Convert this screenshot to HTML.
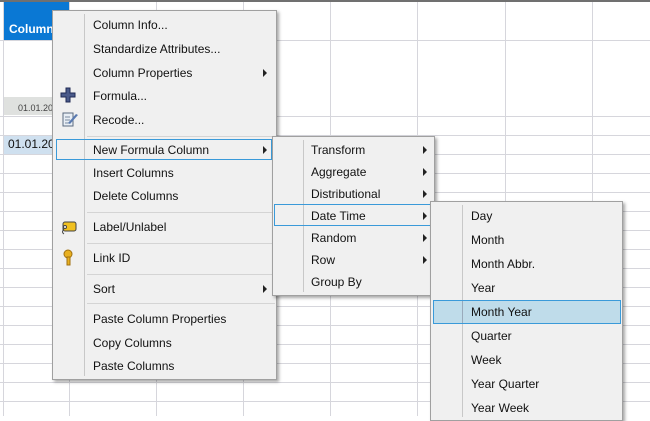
<!DOCTYPE html>
<html><head><style>
*{margin:0;padding:0;box-sizing:border-box}
body{width:650px;height:416px;overflow:hidden;background:#fff;position:relative;font-family:"Liberation Sans",sans-serif;font-size:12px;color:#111}
.a{position:absolute}
.vl{position:absolute;top:2px;bottom:0;width:1px;background:#d6d6dc}
.hl{position:absolute;left:0;right:0;height:1px;background:#d6d6dc}
.menu{position:absolute;background:#f0f0f0;border:1px solid #a0a0a0;box-shadow:2px 2px 3px rgba(0,0,0,.35)}
.div{position:absolute;top:3px;bottom:3px;width:1px;background:#c8c8c8}
.it{position:absolute;white-space:nowrap;line-height:14px}
.ar{position:absolute;width:0;height:0;border-top:4px solid transparent;border-bottom:4px solid transparent;border-left:4px solid #222}
.sep{position:absolute;height:1px;background:#d4d4d4}
.hi{position:absolute;border:1px solid #3a9ad9}
</style></head><body>
<div class="a" style="left:0;top:0;width:650px;height:2px;background:#707070"></div>
<div class="a" style="left:3px;top:2px;width:66px;height:38px;background:#0a78d4;color:#fff;font-weight:bold;padding:20px 0 0 6px;font-size:12px">Column</div>
<div class="a" style="left:3px;top:97px;width:66px;height:18px;background:#dfe1df;font-size:9px;color:#444;padding:6px 0 0 15px">01.01.20</div>
<div class="a" style="left:3px;top:135px;width:66px;height:19px;background:#cfe0ef;font-size:12px;padding:2px 0 0 5px">01.01.20</div>
<div class="vl" style="left:3px"></div>
<div class="vl" style="left:69px"></div><div class="vl" style="left:156px"></div><div class="vl" style="left:243px"></div><div class="vl" style="left:330px"></div><div class="vl" style="left:417px"></div><div class="vl" style="left:505px"></div><div class="vl" style="left:592px"></div>
<div class="hl" style="top:40px"></div>
<div class="hl" style="top:116px"></div><div class="hl" style="top:135px"></div><div class="hl" style="top:154px"></div><div class="hl" style="top:173px"></div><div class="hl" style="top:192px"></div><div class="hl" style="top:211px"></div><div class="hl" style="top:230px"></div><div class="hl" style="top:249px"></div><div class="hl" style="top:268px"></div><div class="hl" style="top:287px"></div><div class="hl" style="top:306px"></div><div class="hl" style="top:325px"></div><div class="hl" style="top:344px"></div><div class="hl" style="top:363px"></div><div class="hl" style="top:382px"></div><div class="hl" style="top:401px"></div>

<div class="menu" style="left:52px;top:10px;width:225px;height:370px">
<div class="div" style="left:31px"></div>
<div class="it" style="left:40px;top:7px">Column Info...</div>
<div class="it" style="left:40px;top:31px">Standardize Attributes...</div>
<div class="it" style="left:40px;top:55px">Column Properties</div><div class="ar" style="left:210px;top:58px"></div>
<div class="it" style="left:40px;top:78px">Formula...</div>
<svg class="a" style="left:7px;top:76px" width="16" height="16"><path d="M6 1h4v5h5v4h-5v5H6v-5H1V6h5z" fill="#4a5a8a" stroke="#1f2a55"/></svg>
<div class="it" style="left:40px;top:102px">Recode...</div>
<svg class="a" style="left:9px;top:100px" width="16" height="16"><rect x="1" y="2" width="10" height="13" fill="#e8eef5" stroke="#5a6a80"/><path d="M3 6h5M3 9h5M3 12h5" stroke="#7a8aa0"/><path d="M6 12l8-9 2 1-8 9z" fill="#5a7ab0"/></svg>
<div class="sep" style="left:34px;top:125px;width:188px"></div>
<div class="hi" style="left:3px;top:128px;width:216px;height:21px"></div>
<div class="it" style="left:40px;top:132px">New Formula Column</div><div class="ar" style="left:210px;top:135px"></div>
<div class="it" style="left:40px;top:155px">Insert Columns</div>
<div class="it" style="left:40px;top:178px">Delete Columns</div>
<div class="sep" style="left:34px;top:201px;width:188px"></div>
<svg class="a" style="left:7px;top:208px" width="18" height="16"><rect x="3" y="3" width="13" height="9" rx="2" fill="#f0c020" stroke="#444"/><circle cx="5" cy="8" r="1.5" fill="#fff" stroke="#444"/><path d="M4 10q-3 3 0 5" stroke="#444" fill="none"/></svg>
<div class="it" style="left:40px;top:209px">Label/Unlabel</div>
<div class="sep" style="left:34px;top:232px;width:188px"></div>
<svg class="a" style="left:10px;top:238px" width="12" height="18"><circle cx="5" cy="5" r="4" fill="#e8b020" stroke="#a07010"/><rect x="4" y="8" width="3" height="8" fill="#e8b020" stroke="#a07010"/></svg>
<div class="it" style="left:40px;top:240px">Link ID</div>
<div class="sep" style="left:34px;top:263px;width:188px"></div>
<div class="it" style="left:40px;top:271px">Sort</div><div class="ar" style="left:210px;top:274px"></div>
<div class="sep" style="left:34px;top:292px;width:188px"></div>
<div class="it" style="left:40px;top:301px">Paste Column Properties</div>
<div class="it" style="left:40px;top:325px">Copy Columns</div>
<div class="it" style="left:40px;top:348px">Paste Columns</div>
</div>

<div class="menu" style="left:272px;top:136px;width:163px;height:160px">
<div class="div" style="left:30px"></div>
<div class="it" style="left:38px;top:6px">Transform</div><div class="ar" style="left:150px;top:9px"></div>
<div class="it" style="left:38px;top:28px">Aggregate</div><div class="ar" style="left:150px;top:31px"></div>
<div class="it" style="left:38px;top:50px">Distributional</div><div class="ar" style="left:150px;top:53px"></div>
<div class="hi" style="left:1px;top:67px;width:157px;height:22px"></div>
<div class="it" style="left:38px;top:72px">Date Time</div><div class="ar" style="left:150px;top:75px"></div>
<div class="it" style="left:38px;top:94px">Random</div><div class="ar" style="left:150px;top:97px"></div>
<div class="it" style="left:38px;top:116px">Row</div><div class="ar" style="left:150px;top:119px"></div>
<div class="it" style="left:38px;top:138px">Group By</div>
</div>

<div class="menu" style="left:430px;top:201px;width:193px;height:220px">
<div class="div" style="left:31px"></div>
<div class="it" style="left:40px;top:7px">Day</div>
<div class="it" style="left:40px;top:31px">Month</div>
<div class="it" style="left:40px;top:55px">Month Abbr.</div>
<div class="it" style="left:40px;top:79px">Year</div>
<div class="hi" style="left:2px;top:98px;width:188px;height:24px;background:#bfdcea"></div>
<div class="div" style="left:31px;top:99px;bottom:auto;height:22px;background:#9ab"></div>
<div class="it" style="left:40px;top:103px">Month Year</div>
<div class="it" style="left:40px;top:127px">Quarter</div>
<div class="it" style="left:40px;top:151px">Week</div>
<div class="it" style="left:40px;top:175px">Year Quarter</div>
<div class="it" style="left:40px;top:199px">Year Week</div>
</div>
</body></html>
